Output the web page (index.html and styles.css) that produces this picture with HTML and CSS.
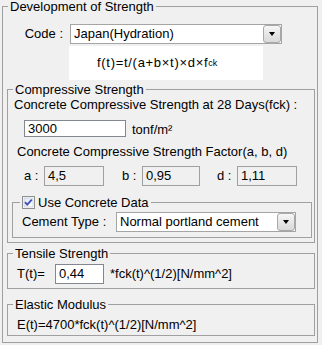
FILE: index.html
```html
<!DOCTYPE html>
<html>
<head>
<meta charset="utf-8">
<link rel="stylesheet" href="styles.css">
</head>
<body>
<div class="panel">
  <section class="grp outer">
    <div class="legend">Development of Strength</div>
    <div class="code-row">
      <span class="code-label">Code :</span>
      <div class="combo code-combo">
        <span class="combo-text">Japan(Hydration)</span>
        <span class="combo-btn"><i class="tri"></i></span>
      </div>
    </div>
    <div class="formula">f(t)=t/(a+b×t)×d×f<sub>ck</sub></div>

    <section class="grp comp">
      <div class="legend">Compressive Strength</div>
      <div class="line1">Concrete Compressive Strength at 28 Days(fck) :</div>
      <div class="fck-row">
        <div class="input fck">3000</div>
        <span class="unit">tonf/m²</span>
      </div>
      <div class="line2">Concrete Compressive Strength Factor(a, b, d)</div>
      <div class="abd-row">
        <span class="abd-label">a :</span>
        <div class="input dis box-a">4,5</div>
        <span class="abd-label lb">b :</span>
        <div class="input dis box-b">0,95</div>
        <span class="abd-label ld">d :</span>
        <div class="input dis box-d">1,11</div>
      </div>
      <section class="grp use">
        <div class="legend chk-legend">
          <svg class="chk" width="13" height="13" viewBox="0 0 13 13">
            <defs>
              <linearGradient id="cg" x1="0" y1="0" x2="1" y2="1">
                <stop offset="0" stop-color="#dfe6f2"/>
                <stop offset="1" stop-color="#ffffff"/>
              </linearGradient>
            </defs>
            <rect x="0.5" y="0.5" width="12" height="12" fill="#fff" stroke="#8e8f8f"/>
            <rect x="2" y="2" width="9" height="9" fill="url(#cg)" stroke="#b7c0d0" stroke-width="0.6"/>
            <path d="M3 6.2 L5.2 8.6 L9.8 3.6" fill="none" stroke="#3d4fbf" stroke-width="1.8"/>
          </svg>
          <span>Use Concrete Data</span>
        </div>
        <div class="cement-row">
          <span class="cement-label">Cement Type :</span>
          <div class="combo cement-combo">
            <span class="combo-text">Normal portland cement</span>
            <span class="combo-btn"><i class="tri"></i></span>
          </div>
        </div>
      </section>
    </section>

    <section class="grp tensile">
      <div class="legend">Tensile Strength</div>
      <div class="t-row">
        <span class="t-label">T(t)=</span>
        <div class="input t-box">0,44</div>
        <span class="t-unit">*fck(t)^(1/2)[N/mm^2]</span>
      </div>
    </section>

    <section class="grp elastic">
      <div class="legend">Elastic Modulus</div>
      <div class="e-line">E(t)=4700*fck(t)^(1/2)[N/mm^2]</div>
    </section>
  </section>
</div>
</body>
</html>
```

FILE: styles.css
```css
* { box-sizing: border-box; }

body {
  margin: 0;
  width: 322px;
  height: 345px;
  overflow: hidden;
  background: #f0f0f0;
  color: #000;
  font: 13px/14px "Liberation Sans", Arial, sans-serif;
}

.panel {
  padding: 6px 4px 0 2px;
}

.grp {
  border: 1px solid #a0a0a0;
}

.legend {
  width: fit-content;
  margin: -7px 0 0 5px;
  padding: 0 2px;
  height: 13px;
  line-height: 13px;
  background: #f0f0f0;
  white-space: nowrap;
}

.outer {
  height: 337px;
}

/* Code row */
.code-row {
  display: flex;
  align-items: center;
  margin-top: 11px;
  height: 20px;
}
.code-label {
  width: 60px;
  text-align: right;
}
.combo {
  display: flex;
  align-items: center;
  height: 20px;
  background: #fff;
  border: 1px solid #a5a5a5;
}
.code-combo {
  margin-left: 7px;
  width: 212px;
}
.combo-text {
  flex: 1;
  padding-left: 3px;
  white-space: nowrap;
  overflow: hidden;
}
.combo-btn {
  width: 18px;
  height: 18px;
  border: 1px solid #a8a8a8;
  border-radius: 3px;
  background: linear-gradient(#f7f7f7, #e6e6e6 50%, #d9d9d9);
  display: flex;
  align-items: center;
  justify-content: center;
}
.tri {
  display: block;
  width: 0;
  height: 0;
  border-top: 4px solid #000;
  border-left: 3.5px solid transparent;
  border-right: 3.5px solid transparent;
}

.formula {
  margin: 2px 0 0 66px;
  width: 194px;
  height: 34px;
  background: #fff;
  display: flex;
  align-items: center;
  padding-left: 28px;
  letter-spacing: 0.7px;
  white-space: nowrap;
}
.formula sub {
  font-size: 9px;
  vertical-align: -2px;
  letter-spacing: 0;
}

/* Compressive */
.comp {
  margin: 9px 2px 0 4px;
  height: 154px;
}
.line1 {
  margin-top: 2px;
  padding-left: 6px;
  white-space: nowrap;
}
.fck-row {
  display: flex;
  align-items: center;
  margin: 8px 0 0 16px;
}
.input {
  background: #fff;
  border: 1px solid #828790;
  padding-left: 3px;
  display: flex;
  align-items: center;
  white-space: nowrap;
}
.fck {
  width: 102px;
  height: 17px;
}
.unit {
  margin-left: 6px;
  padding-top: 3px;
}
.line2 {
  margin-top: 8px;
  padding-left: 9px;
  white-space: nowrap;
}
.abd-row {
  display: flex;
  align-items: center;
  margin: 7px 0 0 16px;
  height: 20px;
}
.abd-label {
  width: 20px;
}
.lb { margin-left: 18px; }
.ld { margin-left: 17px; }
.input.dis {
  background: #f0f0f0;
  border-color: #a0a0a0;
  height: 20px;
}
.box-a { width: 60px; }
.box-b { width: 58px; }
.box-d { width: 60px; }

/* Use Concrete Data */
.use {
  margin: 16px 0 0 4px;
  width: 300px;
  height: 36px;
}
.chk-legend {
  margin-left: 7px;
  display: flex;
  align-items: center;
  gap: 3px;
}
.chk { display: block; }
.cement-row {
  display: flex;
  align-items: center;
  margin-top: 3px;
  height: 20px;
}
.cement-label {
  width: 103px;
  padding-left: 9px;
}
.cement-combo {
  width: 180px;
}

/* Tensile */
.tensile {
  margin: 10px 2px 0 4px;
  height: 36px;
}
.t-row {
  display: flex;
  align-items: center;
  margin-top: 4px;
  padding-left: 9px;
  height: 20px;
}
.t-label { width: 38px; }
.t-box {
  width: 49px;
  height: 20px;
}
.t-unit {
  margin-left: 6px;
  white-space: nowrap;
}

/* Elastic */
.elastic {
  margin: 15px 2px 0 4px;
  height: 32px;
}
.e-line {
  margin-top: 7px;
  padding-left: 9px;
  white-space: nowrap;
}
```
